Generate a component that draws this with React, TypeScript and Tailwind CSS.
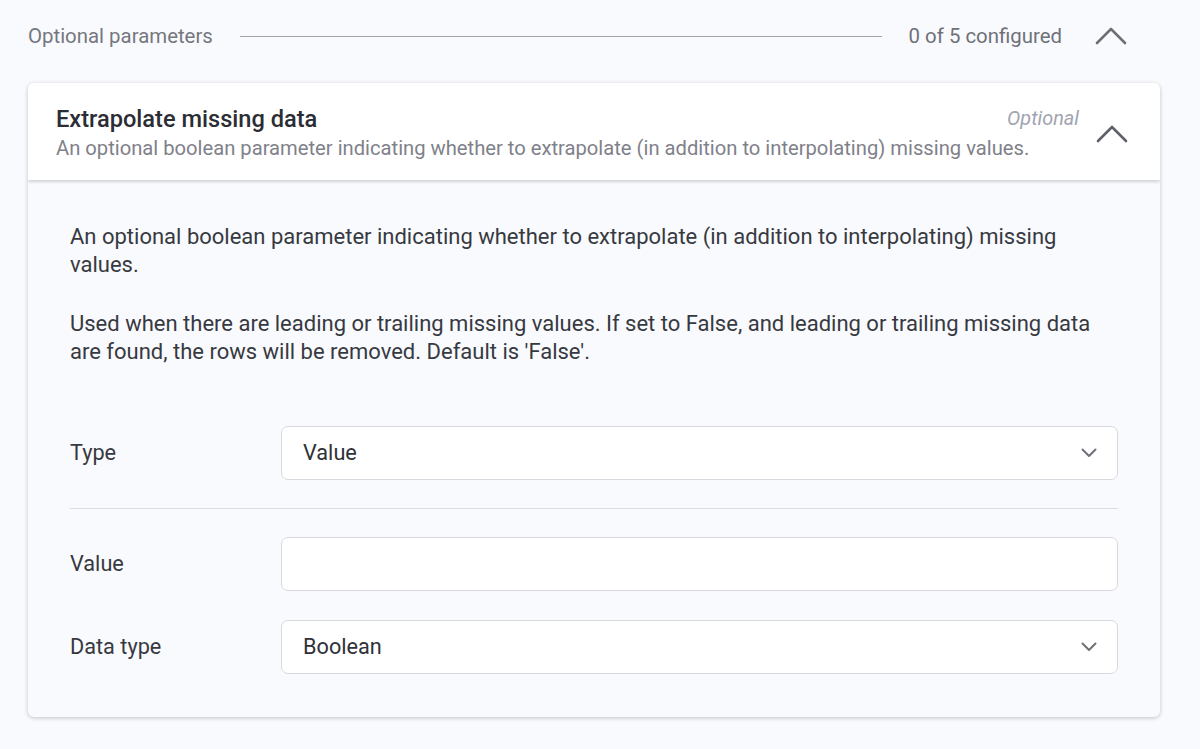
function Chevron({ up, className }: { up?: boolean; className?: string }) {
  return up ? (
    <svg viewBox="0 0 32 18" className={className} fill="none" stroke="currentColor" strokeWidth={2.6} strokeLinecap="round" strokeLinejoin="round">
      <polyline points="2,16 16,2 30,16" />
    </svg>
  ) : (
    <svg viewBox="0 0 16 10" className={className} fill="none" stroke="currentColor" strokeWidth={2} strokeLinecap="round" strokeLinejoin="round">
      <polyline points="1.5,1.5 8,8 14.5,1.5" />
    </svg>
  );
}

function Field({ label, children }: { label: string; children: React.ReactNode }) {
  return (
    <div className="flex items-center">
      <div className="w-[211px] shrink-0 text-[21.7px] text-[#373941]">{label}</div>
      {children}
    </div>
  );
}

function SelectBox({ value }: { value: string }) {
  return (
    <div className="flex h-[54px] flex-1 items-center justify-between rounded-[7px] border border-[#d8d9de] bg-white pl-[21px] pr-[20px]">
      <span className="text-[21.7px] text-[#2f3139]">{value}</span>
      <Chevron className="h-[10px] w-[16px] text-[#6f7179]" />
    </div>
  );
}

export default function App() {
  return (
    <div
      className="min-h-screen bg-[#f9fafd] pl-[28px] pr-[40px] pt-[20px]"
      style={{ fontFamily: 'Roboto, "Liberation Sans", sans-serif' }}
    >
      {/* Section header */}
      <div className="flex h-[32px] items-center pr-[33px]">
        <span className="text-[20.4px] text-[#75777f]">Optional parameters</span>
        <div className="mx-[27px] h-px flex-1 bg-[#a3a5ac]" />
        <span className="text-[20.4px] text-[#6f7179]">0 of 5 configured</span>
        <Chevron up className="ml-[33px] h-[18px] w-[32px] text-[#6d6f77]" />
      </div>

      {/* Parameter card */}
      <div className="mt-[31px] overflow-hidden rounded-[6px] bg-[#f9fafd] shadow-[0_1px_4px_rgba(0,0,0,0.22)]">
        <div className="relative z-10 flex h-[97px] items-center bg-white pl-[28px] pr-[32px] pt-[3px] shadow-[0_2px_3px_rgba(0,0,0,0.16)]">
          <div className="flex-1">
            <div className="flex items-center justify-between">
              <span className="text-[23.6px] font-medium leading-[28px] text-[#2b2d34]">Extrapolate missing data</span>
              <span className="text-[19.9px] italic text-[#a1a4b1]">Optional</span>
            </div>
            <div className="text-[20.2px] leading-[28px] text-[#7f818a]">
              An optional boolean parameter indicating whether to extrapolate (in addition to interpolating) missing values.
            </div>
          </div>
          <Chevron up className="ml-[17px] mt-[2px] h-[18px] w-[32px] text-[#5f6168]" />
        </div>

        <div className="px-[42px] pb-[43px] pt-[43px]">
          <div className="text-[22px] leading-[28px] text-[#373941]">
            <p>An optional boolean parameter indicating whether to extrapolate (in addition to interpolating) missing values.</p>
            <p className="mt-[31px]">
              Used when there are leading or trailing missing values. If set to False, and leading or trailing missing data are found, the rows will be removed. Default is 'False'.
            </p>
          </div>

          <div className="mt-[60px]">
            <Field label="Type">
              <SelectBox value="Value" />
            </Field>
            <div className="mb-[28px] mt-[28px] h-px bg-[#dcdde2]" />
            <Field label="Value">
              <div className="h-[54px] flex-1 rounded-[7px] border border-[#d8d9de] bg-white" />
            </Field>
            <div className="mt-[29px]">
              <Field label="Data type">
                <SelectBox value="Boolean" />
              </Field>
            </div>
          </div>
        </div>
      </div>
    </div>
  );
}
